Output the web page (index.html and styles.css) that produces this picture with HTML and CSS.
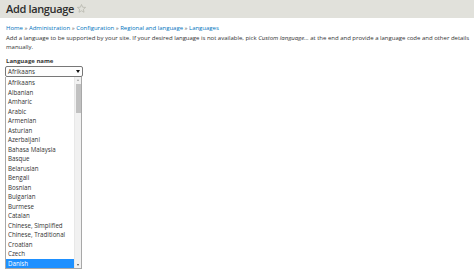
FILE: index.html
```html
<!DOCTYPE html>
<html>
<head>
<meta charset="utf-8">
<link rel="stylesheet" href="styles.css">
</head>
<body>
<header class="page-head">
  <h1 class="title">Add language</h1>
  <svg class="star" viewBox="0 0 10 10" width="9" height="9"><polygon points="5,0.6 6.3,3.6 9.5,3.8 7.1,5.9 7.8,9.2 5,7.5 2.2,9.2 2.9,5.9 0.5,3.8 3.7,3.6" fill="none" stroke="#b4b4aa" stroke-width="0.8"/></svg>
</header>
<main class="content">
  <nav class="crumbs"><a>Home</a> » <a>Administration</a> » <a>Configuration</a> » <a>Regional and language</a> » <a>Languages</a></nav>
  <p class="desc"><span class="line">Add a language to be supported by your site. If your desired language is not available, pick <em>Custom language...</em> at the end and provide a language code and other details</span><br>manually.</p>
  <div class="field">
    <div class="label">Language name</div>
    <div class="select"><span>Afrikaans</span><span class="arrow"></span></div>
    <div class="dropdown">
      <ul class="options">
        <li>Afrikaans</li>
        <li>Albanian</li>
        <li>Amharic</li>
        <li>Arabic</li>
        <li>Armenian</li>
        <li>Asturian</li>
        <li>Azerbaijani</li>
        <li>Bahasa Malaysia</li>
        <li>Basque</li>
        <li>Belarusian</li>
        <li>Bengali</li>
        <li>Bosnian</li>
        <li>Bulgarian</li>
        <li>Burmese</li>
        <li>Catalan</li>
        <li>Chinese, Simplified</li>
        <li>Chinese, Traditional</li>
        <li>Croatian</li>
        <li>Czech</li>
        <li class="sel">Danish</li>
      </ul>
      <div class="scrollbar">
        <div class="sb-btn up"></div>
        <div class="sb-track"><div class="sb-thumb"></div></div>
        <div class="sb-btn down"></div>
      </div>
    </div>
  </div>
</main>
</body>
</html>
```
FILE: styles.css
```css
html, body {
  margin: 0;
  padding: 0;
  background: #fff;
}
body {
  font-family: "Open Sans", "DejaVu Sans", sans-serif;
  color: #333;
  font-size: 6px;
  width: 474px;
  height: 271px;
  overflow: hidden;
}
.page-head {
  background: #e1e1db;
  height: 18px;
  display: flex;
  align-items: center;
  padding-left: 6px;
  gap: 3px;
}
.title {
  margin: 0;
  font-size: 11px;
  font-weight: 600;
  letter-spacing: -0.35px;
  color: #2d2d2d;
  line-height: 18px;
}
.star {
  display: block;
  margin-top: -1px;
}
.content {
  padding: 0 6px;
}
.crumbs {
  margin-top: 6px;
  line-height: 9px;
  color: #555;
  letter-spacing: -0.02px;
}
.crumbs a {
  color: #0074bd;
}
.desc {
  margin: 1px 0 0;
  line-height: 9px;
}
.desc .line {
  white-space: nowrap;
  letter-spacing: -0.01px;
}
.field {
  margin-top: 5px;
}
.label {
  font-weight: 700;
  line-height: 8px;
  margin-bottom: 1px;
}
.select {
  width: 74px;
  height: 9px;
  box-sizing: content-box;
  margin-left: -1px;
  border: 1px solid #777;
  border-radius: 2px;
  display: flex;
  align-items: center;
  justify-content: space-between;
  padding: 0 0 0 2px;
  line-height: 9px;
  background: #fdfdfd;
  font-size: 6.2px;
}
.arrow {
  width: 0;
  height: 0;
  border-left: 2px solid transparent;
  border-right: 2px solid transparent;
  border-top: 3px solid #111;
  margin-right: 2px;
}
.dropdown {
  margin-left: -1px;
  width: 75px;
  height: 191px;
  border: 1px solid #a8a8a8;
  border-top: none;
  display: flex;
  background: #fff;
}
.options {
  list-style: none;
  margin: 0;
  padding: 0;
  flex: 1;
  display: flex;
  flex-direction: column;
  padding-top: 1px;
}
.options li {
  height: 9.5px;
  line-height: 9.5px;
  padding-left: 2px;
  color: #333;
  white-space: nowrap;
  font-size: 6.2px;
}
.options li.sel {
  background: #1e90ff;
  color: #fff;
}
.scrollbar {
  width: 6px;
  background: #f1f1f1;
  display: flex;
  flex-direction: column;
  border-left: 1px solid #e8e8e8;
}
.sb-btn {
  height: 6px;
  position: relative;
}
.sb-btn::after {
  content: "";
  position: absolute;
  left: 1.5px;
  width: 0;
  height: 0;
  border-left: 1.5px solid transparent;
  border-right: 1.5px solid transparent;
}
.sb-btn.up::after {
  top: 2px;
  border-bottom: 2px solid #a3a3a3;
}
.sb-btn.down::after {
  top: 2px;
  border-top: 2px solid #505050;
}
.sb-track {
  flex: 1;
  padding-top: 1px;
}
.sb-thumb {
  height: 29px;
  margin: 0 0.5px;
  background: #c1c1c1;
}
```
